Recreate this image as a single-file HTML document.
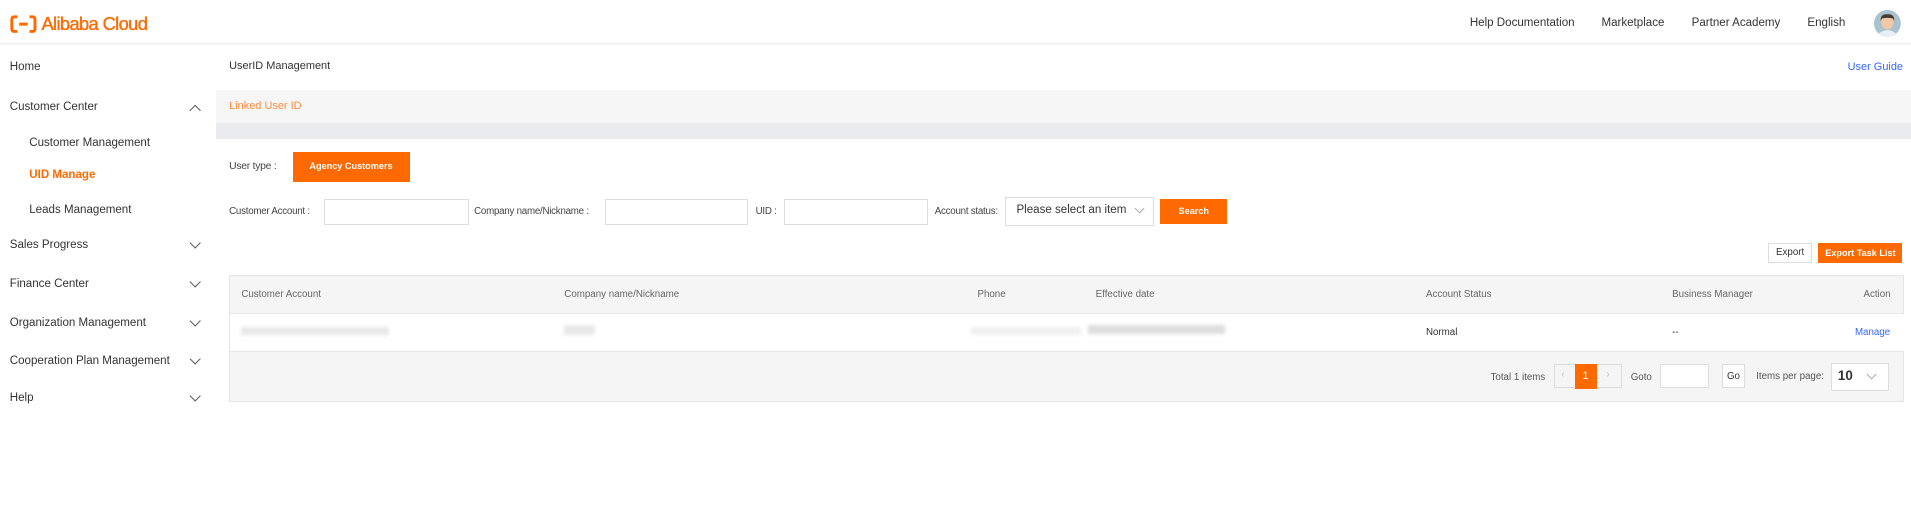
<!DOCTYPE html>
<html><head><meta charset="utf-8">
<style>
html,body{margin:0;padding:0;background:#fff;width:1911px;height:514px;overflow:hidden}
#w{zoom:1.21875;position:relative;width:1568px;height:422px;font-family:"Liberation Sans",Arial,sans-serif;color:#333}
.a{position:absolute;white-space:nowrap}
.top{left:0;top:0;width:1568px;height:35px;border-bottom:1px solid #eee;box-shadow:0 1px 2px rgba(0,0,0,.04)}
.nav{font-size:9.5px;color:#333}
.tn{font-size:9.5px;color:#333;top:14px}
.chev{width:6px;height:6px;border-right:1px solid #555;border-bottom:1px solid #555;transform:rotate(45deg)}
.lbl{font-size:8px;color:#444;letter-spacing:-.2px}
.inp{border:1px solid #ddd;background:#fff;height:20px}
.btn{background:#ff6a00;color:#fff;font-size:7.5px;font-weight:bold;text-align:center}
.th{font-size:8px;color:#666;top:237px}
.blur{background:#e8e8e8;height:7px;filter:blur(1.5px)}
</style></head><body><div id="w">
<div class="a top"></div>
<svg class="a" style="left:8px;top:12px" width="22" height="15" viewBox="0 0 22 15"><path d="M6 1.5H3.5Q1.5 1.5 1.5 3.5V11.5Q1.5 13.5 3.5 13.5H6M16 1.5H18.5Q20.5 1.5 20.5 3.5V11.5Q20.5 13.5 18.5 13.5H16M7.5 7.5H14.5" fill="none" stroke="#ff6a00" stroke-width="2.4"/></svg>
<div class="a" style="left:34px;top:11px;font-size:15px;color:#ff6a00;letter-spacing:-.5px;-webkit-text-stroke:.3px #ff6a00">Alibaba Cloud</div>
<div class="a tn" style="left:1206px">Help Documentation</div>
<div class="a tn" style="left:1314px">Marketplace</div>
<div class="a tn" style="left:1388px">Partner Academy</div>
<div class="a tn" style="left:1483px">English</div>
<svg class="a" style="left:1538px;top:8px" width="22" height="22" viewBox="0 0 22 22"><circle cx="11" cy="11" r="11" fill="#a9c2cf"/><ellipse cx="11" cy="10" rx="5" ry="6" fill="#f2c9a8"/><path d="M5.5 9Q5 3 11 3.5Q17 3 16.5 9L15.5 7Q11 6 6.5 7Z" fill="#4a3a30"/><path d="M3 20Q11 13 19 20Q11 24 3 20Z" fill="#e8eef2"/></svg>

<div class="a nav" style="left:8px;top:50px">Home</div>
<div class="a nav" style="left:8px;top:83px">Customer Center</div>
<div class="a chev" style="left:157px;top:87px;transform:rotate(225deg)"></div>
<div class="a nav" style="left:24px;top:112px">Customer Management</div>
<div class="a nav" style="left:24px;top:139px;color:#ff6a00;font-weight:bold">UID Manage</div>
<div class="a nav" style="left:24px;top:167px">Leads Management</div>
<div class="a nav" style="left:8px;top:196px">Sales Progress</div><div class="a chev" style="left:157px;top:196px"></div>
<div class="a nav" style="left:8px;top:228px">Finance Center</div><div class="a chev" style="left:157px;top:228px"></div>
<div class="a nav" style="left:8px;top:260px">Organization Management</div><div class="a chev" style="left:157px;top:260px"></div>
<div class="a nav" style="left:8px;top:291px">Cooperation Plan Management</div><div class="a chev" style="left:157px;top:291px"></div>
<div class="a nav" style="left:8px;top:322px">Help</div><div class="a chev" style="left:157px;top:322px"></div>

<div class="a" style="left:188px;top:49px;font-size:9px">UserID Management</div>
<div class="a" style="left:1516px;top:50px;font-size:9px;color:#3366ff">User Guide</div>
<div class="a" style="left:177px;top:74px;width:1391px;height:27px;background:#f6f6f7"></div>
<div class="a" style="left:188px;top:82px;font-size:9px;color:#ff8a3d">Linked User ID</div>
<div class="a" style="left:177px;top:101px;width:1391px;height:13px;background:#e9ebef"></div>

<div class="a lbl" style="left:188px;top:132px;font-size:8.5px">User type :</div>
<div class="a btn" style="left:240px;top:125px;width:96px;height:24px;line-height:24px">Agency Customers</div>

<div class="a lbl" style="left:188px;top:169px">Customer Account :</div>
<div class="a inp" style="left:266px;top:163px;width:117px"></div>
<div class="a lbl" style="left:389px;top:169px">Company name/Nickname :</div>
<div class="a inp" style="left:496px;top:163px;width:116px"></div>
<div class="a lbl" style="left:620px;top:169px">UID :</div>
<div class="a inp" style="left:643px;top:163px;width:117px"></div>
<div class="a lbl" style="left:767px;top:169px">Account status:</div>
<div class="a inp" style="left:825px;top:162px;width:120px;height:22px"></div>
<div class="a" style="left:834px;top:167px;font-size:9.5px;color:#333">Please select an item</div>
<div class="a" style="left:932px;top:168px;width:5px;height:5px;border-right:1px solid #aaa;border-bottom:1px solid #aaa;transform:rotate(45deg)"></div>
<div class="a btn" style="left:952px;top:163px;width:55px;height:21px;line-height:21px">Search</div>

<div class="a" style="left:1451px;top:199px;width:34px;height:15px;border:1px solid #ddd;font-size:8px;line-height:15px;text-align:center;color:#333">Export</div>
<div class="a btn" style="left:1492px;top:199px;width:69px;height:17px;line-height:17px">Export Task List</div>

<div class="a" style="left:188px;top:226px;width:1373px;height:102px;border:1px solid #e5e5e5;background:#f5f5f5"></div>
<div class="a" style="left:189px;top:257px;width:1373px;height:30px;background:#fff;border-top:1px solid #e8e8e8;border-bottom:1px solid #e8e8e8"></div>
<div class="a th" style="left:198px">Customer Account</div>
<div class="a th" style="left:463px">Company name/Nickname</div>
<div class="a th" style="left:802px">Phone</div>
<div class="a th" style="left:899px">Effective date</div>
<div class="a th" style="left:1170px">Account Status</div>
<div class="a th" style="left:1372px">Business Manager</div>
<div class="a th" style="left:1529px">Action</div>
<div class="a blur" style="left:198px;top:268px;width:121px"></div>
<div class="a blur" style="left:463px;top:267px;width:25px;height:8px"></div>
<div class="a blur" style="left:797px;top:268px;width:90px;background:#f0f0f0"></div>
<div class="a blur" style="left:893px;top:267px;width:112px;background:#ddd"></div>
<div class="a" style="left:1170px;top:268px;font-size:8px">Normal</div>
<div class="a" style="left:1372px;top:268px;font-size:8px">--</div>
<div class="a" style="left:1522px;top:268px;font-size:8px;color:#3366ff">Manage</div>

<div class="a" style="left:1223px;top:305px;font-size:8px;color:#555">Total 1 items</div>
<div class="a" style="left:1275px;top:299px;width:54px;height:18px;border:1px solid #ddd;background:#f5f5f5"></div>
<div class="a" style="left:1281px;top:303px;font-size:8px;color:#bbb">‹</div>
<div class="a" style="left:1318px;top:303px;font-size:8px;color:#bbb">›</div>
<div class="a" style="left:1292px;top:299px;width:18px;height:20px;background:#ff6a00;color:#fff;font-size:9px;text-align:center;line-height:20px">1</div>
<div class="a" style="left:1338px;top:305px;font-size:8px;color:#555">Goto</div>
<div class="a inp" style="left:1362px;top:299px;width:39px;height:18px"></div>
<div class="a" style="left:1413px;top:299px;width:17px;height:18px;border:1px solid #ddd;background:#fff;font-size:8px;text-align:center;line-height:20px">Go</div>
<div class="a" style="left:1441px;top:304px;font-size:8px;color:#555">Items per page:</div>
<div class="a inp" style="left:1502px;top:298px;width:46px;height:21px"></div>
<div class="a" style="left:1508px;top:302px;font-size:11px;font-weight:bold;color:#333">10</div>
<div class="a" style="left:1533px;top:304px;width:5px;height:5px;border-right:1px solid #aaa;border-bottom:1px solid #aaa;transform:rotate(45deg)"></div>
</div></body></html>
